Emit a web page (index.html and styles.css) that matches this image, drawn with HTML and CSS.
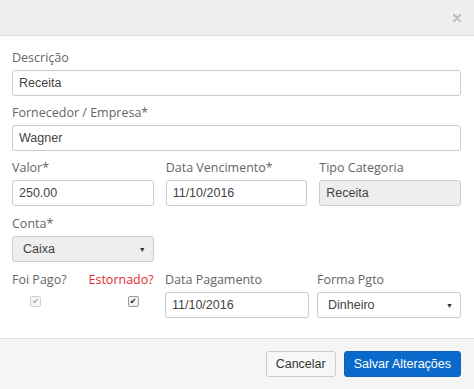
FILE: index.html
```html
<!DOCTYPE html>
<html lang="pt-BR">
<head>
    <meta charset="UTF-8">
    <meta name="viewport" content="width=device-width, initial-scale=1.0">
    <title>Editar Lançamento</title>
    <link rel="stylesheet" href="styles.css">
</head>
<body>

    <div class="modal">
        <div class="modal-header">
            <button class="close" type="button" aria-label="Fechar">
                <svg width="8" height="8" viewBox="0 0 8 8">
                    <path d="M1 1 L7 7 M7 1 L1 7" stroke="#bcbcbc" stroke-width="2" stroke-linecap="round"/>
                </svg>
            </button>
        </div>

        <div class="modal-body">
            <div class="field">
                <label>Descrição</label>
                <input class="control" type="text" value="Receita">
            </div>

            <div class="field">
                <label>Fornecedor / Empresa*</label>
                <input class="control" type="text" value="Wagner">
            </div>

            <div class="row-3">
                <div class="field">
                    <label>Valor*</label>
                    <input class="control" type="text" value="250.00">
                </div>
                <div class="field">
                    <label>Data Vencimento*</label>
                    <input class="control" type="text" value="11/10/2016">
                </div>
                <div class="field">
                    <label>Tipo Categoria</label>
                    <input class="control" type="text" value="Receita" disabled>
                </div>
            </div>

            <div class="row-3">
                <div class="field">
                    <label>Conta*</label>
                    <div class="select disabled">
                        <span>Caixa</span>
                        <span class="arrow">&#9660;</span>
                    </div>
                </div>
            </div>

            <div class="row-last">
                <div class="field">
                    <label>Foi Pago?</label>
                    <div class="check-wrap pago">
                        <span class="check disabled">&#10004;</span>
                    </div>
                </div>
                <div class="field">
                    <label class="red">Estornado?</label>
                    <div class="check-wrap estorno">
                        <span class="check">&#10004;</span>
                    </div>
                </div>
                <div class="field">
                    <label>Data Pagamento</label>
                    <input class="control" type="text" value="11/10/2016">
                </div>
                <div class="field">
                    <label>Forma Pgto</label>
                    <div class="select">
                        <span>Dinheiro</span>
                        <span class="arrow">&#9660;</span>
                    </div>
                </div>
            </div>
        </div>

        <div class="modal-footer">
            <button class="btn" type="button">Cancelar</button>
            <button class="btn btn-primary" type="button">Salvar Alterações</button>
        </div>
    </div>

</body>
</html>
```

FILE: styles.css
```css
body {
    margin: 0;
    background: #ffffff;
    font-family: 'Open Sans', sans-serif;
}

.modal {
    width: 474px;
    height: 389px;
    background: #ffffff;
    overflow: hidden;
}

.modal-header {
    height: 35px;
    background: #eeeeee;
    border-bottom: 1px solid #dadada;
    display: flex;
    justify-content: flex-end;
    align-items: center;
    padding-right: 13px;
}

.close {
    background: none;
    border: none;
    padding: 0;
    display: flex;
    cursor: pointer;
}

.modal-body {
    padding: 12px 13px 20px 12px;
}

.field {
    display: flex;
    flex-direction: column;
    margin-bottom: 7px;
}

.row-3 .field,
.row-last .field {
    margin-bottom: 0;
}

.row-3 {
    display: grid;
    grid-template-columns: repeat(3, 1fr);
    column-gap: 12px;
    margin-bottom: 8px;
}

.row-last {
    display: grid;
    grid-template-columns: 1fr 1fr 144px 144px;
    column-gap: 8px;
}

label {
    font-size: 12.5px;
    line-height: 18px;
    padding-top: 1px;
    color: #666666;
    margin-bottom: 3px;
    white-space: nowrap;
}

label.red {
    color: #e52b2b;
}

.control,
.select {
    box-sizing: border-box;
    height: 26px;
    width: 100%;
    border: 1px solid #cccccc;
    border-radius: 3px;
    padding: 0 6px;
    font-family: 'Liberation Sans', Arial, sans-serif;
    font-size: 12.5px;
    color: #444444;
    background: #ffffff;
    outline: none;
}

.control:disabled,
.select.disabled {
    background: #eeeeee;
    color: #444444;
}

.select {
    display: flex;
    align-items: center;
    justify-content: space-between;
    padding: 0 7px 0 10px;
}

.select .arrow {
    font-size: 7px;
    color: #333333;
}

.check-wrap {
    height: 26px;
}

.pago {
    padding-left: 18px;
}

.estorno {
    padding-left: 39px;
}

.check {
    box-sizing: border-box;
    display: flex;
    align-items: center;
    justify-content: center;
    width: 11px;
    height: 11px;
    margin-top: 4px;
    border: 1px solid #9a9a9a;
    border-radius: 2px;
    background: #f2f2f2;
    font-size: 8px;
    line-height: 1;
    color: #222222;
    font-family: 'DejaVu Sans', sans-serif;
}

.check.disabled {
    border-color: #cfcfcf;
    color: #a8a8a8;
    background: #f6f6f6;
}

.modal-footer {
    border-top: 1px solid #e2e2e2;
    background: #f5f5f5;
    display: flex;
    justify-content: flex-end;
    gap: 8px;
    padding: 12px 13px 12px 12px;
}

.btn {
    height: 26px;
    padding: 0 9px;
    border: 1px solid #cccccc;
    border-radius: 3px;
    background: #f7f7f7;
    color: #333333;
    font-family: 'Liberation Sans', Arial, sans-serif;
    font-size: 12.5px;
    cursor: pointer;
}

.btn-primary {
    background: #0a6acb;
    border-color: #0a62bd;
    color: #ffffff;
}
```
